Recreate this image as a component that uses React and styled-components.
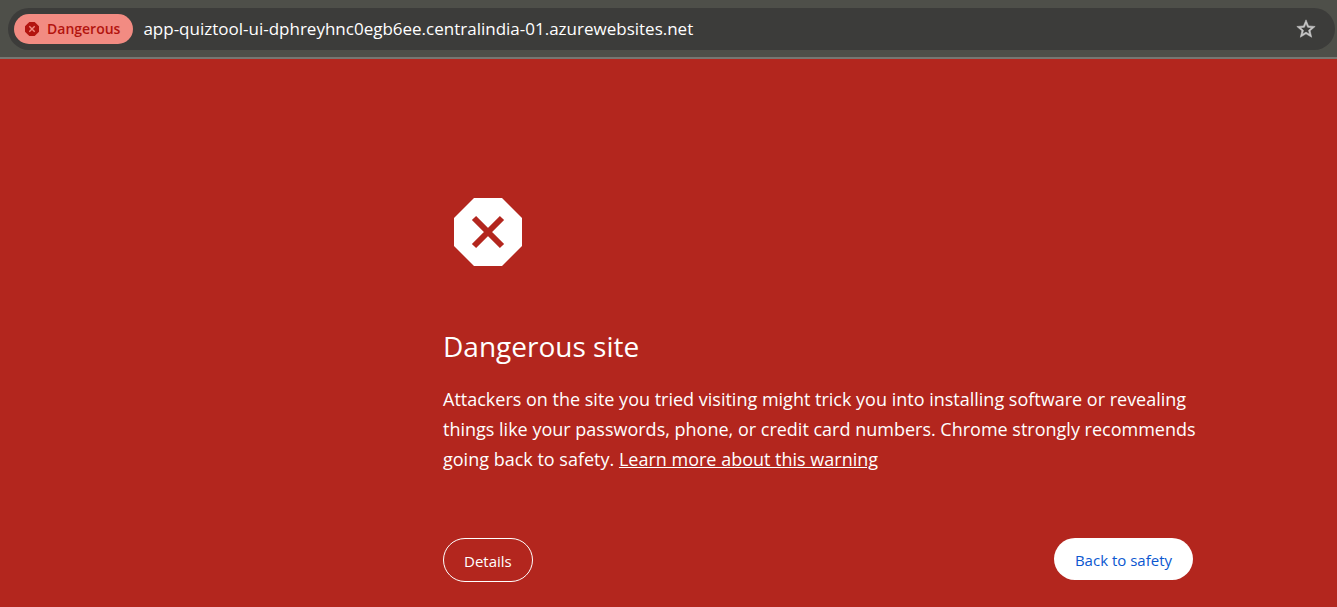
import styled, { createGlobalStyle } from "styled-components";
import { useState } from "react";

const GlobalStyle = createGlobalStyle`
  *,
  *::before,
  *::after {
    box-sizing: border-box;
  }

  body {
    margin: 0;
    background-color: #b3261e;
    font-family: "Segoe UI", "Open Sans", "Noto Sans", sans-serif;
  }

  button,
  input {
    font-family: inherit;
  }
`;

const StyledPage = styled.div`
  display: flex;
  flex-direction: column;
  min-height: 100vh;
`;

const StyledToolbar = styled.header`
  padding: 8px 2px 7px 8px;
  background-color: #4e4f49;
  border-bottom: 2px solid #777772;
`;

const StyledAddressBar = styled.form`
  display: flex;
  align-items: center;
  height: 42px;
  padding: 0 18px 0 6px;
  border-radius: 21px;
  background-color: #3c3c3a;
`;

const StyledSecurityChip = styled.button`
  display: flex;
  align-items: center;
  gap: 8px;
  flex-shrink: 0;
  height: 30px;
  padding: 0 13px 0 11px;
  border: none;
  border-radius: 15px;
  background-color: #f28b82;
  color: #b3140f;
  font-size: 14px;
  font-weight: 600;
  line-height: 20px;
`;

const StyledAddressInput = styled.input`
  flex: 1;
  min-width: 0;
  padding: 0 10px;
  border: none;
  outline: none;
  background-color: transparent;
  color: white;
  font-size: 17px;
  line-height: 24px;
`;

const StyledIconButton = styled.button`
  display: flex;
  padding: 0;
  border: none;
  background-color: transparent;
  color: #c7c7c7;
`;

const StyledMain = styled.main`
  flex: 1;
  padding: 128px 124px 24px 443px;
  color: white;
`;

const StyledWarning = styled.div`
  max-width: 770px;
`;

const StyledWarningIcon = styled.svg`
  display: block;
  width: 90px;
  height: 90px;
`;

const StyledHeading = styled.h1`
  margin: 49px 0 18px;
  font-size: 28px;
  font-weight: 400;
  line-height: 40px;
`;

const StyledText = styled.p`
  margin: 0;
  font-size: 18px;
  line-height: 30px;
`;

const StyledLink = styled.a`
  color: inherit;
  text-decoration: underline;
`;

const StyledButtonRow = styled.div`
  display: flex;
  justify-content: space-between;
  align-items: flex-start;
  margin-top: 64px;
  padding-right: 20px;
`;

const StyledButton = styled.button`
  height: ${({ $primary }) => ($primary ? "42px" : "44px")};
  padding: ${({ $primary }) => ($primary ? "2px 21px 0" : "2px 20px 0")};
  border: ${({ $primary }) => ($primary ? "none" : "1px solid white")};
  border-radius: 22px;
  background-color: ${({ $primary }) => ($primary ? "white" : "transparent")};
  color: ${({ $primary }) => ($primary ? "#0b57d0" : "white")};
  font-size: 15px;
  line-height: 24px;
`;

function OctagonIcon({ size }) {
  return (
    <svg width={size} height={size} viewBox="0 0 14 14" aria-hidden="true">
      <path
        d="M4.3 0H9.7L14 4.3V9.7L9.7 14H4.3L0 9.7V4.3Z"
        fill="currentColor"
      />
      <path
        d="M4.3 4.3L9.7 9.7M9.7 4.3L4.3 9.7"
        stroke="#f28b82"
        strokeWidth="1.4"
      />
    </svg>
  );
}

function StarIcon() {
  return (
    <svg width="22" height="22" viewBox="0 0 24 24" aria-hidden="true">
      <path
        d="M22 9.24l-7.19-.62L12 2 9.19 8.63 2 9.24l5.46 4.73L5.82 21 12 17.27 18.18 21l-1.63-7.03L22 9.24zM12 15.4l-3.76 2.27 1-4.28-3.32-2.88 4.38-.38L12 6.1l1.71 4.04 4.38.38-3.32 2.88 1 4.28L12 15.4z"
        fill="currentColor"
        stroke="currentColor"
        strokeWidth="0.6"
      />
    </svg>
  );
}

export default function App() {
  const [address, setAddress] = useState(
    "app-quiztool-ui-dphreyhnc0egb6ee.centralindia-01.azurewebsites.net"
  );

  return (
    <>
      <GlobalStyle />
      <StyledPage>
        <StyledToolbar>
          <StyledAddressBar onSubmit={(event) => event.preventDefault()}>
            <StyledSecurityChip type="button">
              <OctagonIcon size={14} />
              Dangerous
            </StyledSecurityChip>
            <StyledAddressInput
              type="text"
              aria-label="Address"
              spellCheck={false}
              value={address}
              onChange={(event) => setAddress(event.target.value)}
            />
            <StyledIconButton type="button" aria-label="Bookmark this tab">
              <StarIcon />
            </StyledIconButton>
          </StyledAddressBar>
        </StyledToolbar>

        <StyledMain>
          <StyledWarning>
            <StyledWarningIcon viewBox="0 0 90 90" aria-hidden="true">
              <path
                d="M31 11H59L79 31V59L59 79H31L11 59V31Z"
                fill="white"
              />
              <path
                d="M31 31L59 59M59 31L31 59"
                stroke="#b3261e"
                strokeWidth="6"
              />
            </StyledWarningIcon>
            <StyledHeading>Dangerous site</StyledHeading>
            <StyledText>
              Attackers on the site you tried visiting might trick you into
              installing software or revealing things like your passwords,
              phone, or credit card numbers. Chrome strongly recommends going
              back to safety.{" "}
              <StyledLink href="#learn-more">
                Learn more about this warning
              </StyledLink>
            </StyledText>
            <StyledButtonRow>
              <StyledButton type="button">Details</StyledButton>
              <StyledButton type="button" $primary>
                Back to safety
              </StyledButton>
            </StyledButtonRow>
          </StyledWarning>
        </StyledMain>
      </StyledPage>
    </>
  );
}
